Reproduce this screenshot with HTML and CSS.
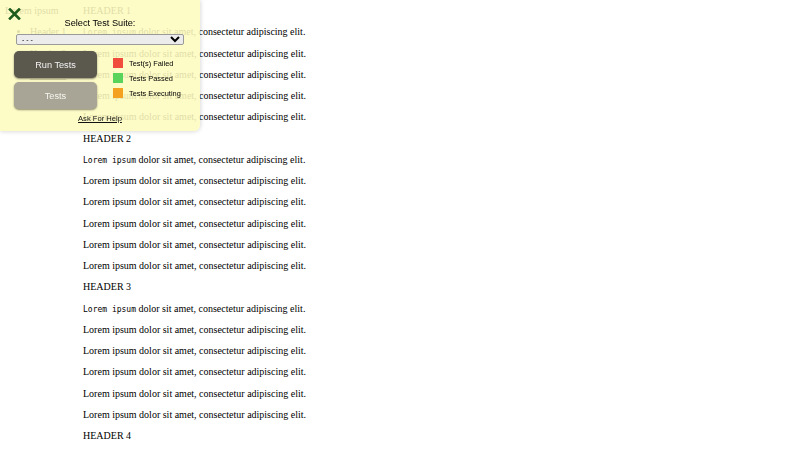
FILE: index.html
```html
<!DOCTYPE html>
<html lang="en">
<head>
    <meta charset="UTF-8">
    <meta name="viewport" content="width=device-width, initial-scale=1.0">
    <title>Test Runner</title>
    <link rel="stylesheet" href="styles.css">
</head>
<body>
    <div class="page">
        <div class="sidebar">
            <p>Lorem ipsum</p>
            <ul>
                <li><a href>Header 1</a></li>
                <li><a href>Header 2</a></li>
                <li><a href>Header 3</a></li>
                <li><a href>Header 4</a></li>
            </ul>
        </div>
        <div class="content">
            <h2>HEADER 1</h2>
            <p><code>Lorem ipsum</code> dolor sit amet, consectetur adipiscing elit.</p>
            <p>Lorem ipsum dolor sit amet, consectetur adipiscing elit.</p>
            <p>Lorem ipsum dolor sit amet, consectetur adipiscing elit.</p>
            <p>Lorem ipsum dolor sit amet, consectetur adipiscing elit.</p>
            <p>Lorem ipsum dolor sit amet, consectetur adipiscing elit.</p>
            <h2>HEADER 2</h2>
            <p><code>Lorem ipsum</code> dolor sit amet, consectetur adipiscing elit.</p>
            <p>Lorem ipsum dolor sit amet, consectetur adipiscing elit.</p>
            <p>Lorem ipsum dolor sit amet, consectetur adipiscing elit.</p>
            <p>Lorem ipsum dolor sit amet, consectetur adipiscing elit.</p>
            <p>Lorem ipsum dolor sit amet, consectetur adipiscing elit.</p>
            <p>Lorem ipsum dolor sit amet, consectetur adipiscing elit.</p>
            <h2>HEADER 3</h2>
            <p><code>Lorem ipsum</code> dolor sit amet, consectetur adipiscing elit.</p>
            <p>Lorem ipsum dolor sit amet, consectetur adipiscing elit.</p>
            <p>Lorem ipsum dolor sit amet, consectetur adipiscing elit.</p>
            <p>Lorem ipsum dolor sit amet, consectetur adipiscing elit.</p>
            <p>Lorem ipsum dolor sit amet, consectetur adipiscing elit.</p>
            <p>Lorem ipsum dolor sit amet, consectetur adipiscing elit.</p>
            <h2>HEADER 4</h2>
            <p><code>Lorem ipsum</code> dolor sit amet, consectetur adipiscing elit.</p>
            <p>Lorem ipsum dolor sit amet, consectetur adipiscing elit.</p>
        </div>
    </div>

    <div class="test-panel">
        <button class="close-btn" type="button" title="Close">
            <svg width="13" height="12" viewBox="0 0 13 12">
                <path d="M2 1.5 L11 10.5 M11 1.5 L2 10.5" stroke="#1d5c1d" stroke-width="2.6" stroke-linecap="square"/>
            </svg>
        </button>
        <div class="suite-title">Select Test Suite:</div>
        <select class="suite-select">
            <option>- - -</option>
        </select>
        <div class="controls">
            <div class="buttons">
                <button class="run-btn" type="button">Run Tests</button>
                <button class="tests-btn" type="button">Tests</button>
            </div>
            <ul class="legend">
                <li><span class="swatch failed"></span>Test(s) Failed</li>
                <li><span class="swatch passed"></span>Tests Passed</li>
                <li><span class="swatch running"></span>Tests Executing</li>
            </ul>
        </div>
        <a class="help-link" href>Ask For Help</a>
    </div>
</body>
</html>
```

FILE: styles.css
```css
body {
    font-family: "Liberation Serif", serif;
    font-size: 10px;
    color: #000;
    background-color: #fff;
    margin: 0;
    padding: 5px;
}
.page {
    display: flex;
}
p, h2 {
    margin: 0 0 10px 0;
    height: 11.25px;
    line-height: 11.25px;
}
h2 {
    font-size: 10px;
    font-weight: normal;
}
code {
    font-family: "DejaVu Sans Mono", monospace;
    font-size: 8px;
    line-height: 1;
}
.sidebar {
    width: 78px;
    flex-shrink: 0;
}
.sidebar ul {
    margin: 0;
    padding-left: 25px;
}
.sidebar li {
    height: 11.25px;
    line-height: 11.25px;
    margin-bottom: 10px;
}
.sidebar a {
    color: #000;
}

/* floating test panel */
.test-panel {
    position: fixed;
    top: 0;
    left: 0;
    width: 200px;
    height: 131px;
    box-sizing: border-box;
    padding: 18px 16px 0 16px;
    background-color: rgba(253, 250, 190, 0.88);
    border-bottom-right-radius: 6px;
    box-shadow: 0 0 5px rgba(0, 0, 0, 0.2);
    font-family: "Liberation Sans", Arial, sans-serif;
    color: #000;
}
.close-btn {
    position: absolute;
    top: 8px;
    left: 8px;
    padding: 0;
    border: none;
    background: none;
    cursor: pointer;
    line-height: 0;
}
.suite-title {
    text-align: center;
    font-size: 9.2px;
    line-height: 10px;
}
.suite-select {
    display: block;
    width: 168px;
    height: 11px;
    margin-top: 6px;
    padding: 0 0 0 1px;
    font-size: 7px;
    font-family: "Liberation Sans", Arial, sans-serif;
    background-color: #ececec;
    border: 1px solid #9a9a9a;
    border-radius: 2px;
    color: #000;
}
.controls {
    display: flex;
    margin: 6px 0 0 -2px;
}
.buttons {
    display: flex;
    flex-direction: column;
    gap: 4px;
}
.buttons button {
    width: 83px;
    height: 27px;
    border: none;
    border-radius: 5px;
    font-family: "Liberation Sans", Arial, sans-serif;
    font-size: 9.2px;
    box-shadow: 0 1px 2px rgba(0, 0, 0, 0.45);
    cursor: pointer;
}
.run-btn {
    background-color: #5b584e;
    color: #f2f2f2;
}
.tests-btn {
    background-color: #a8a596;
    color: #f6f6ef;
}
.legend {
    list-style: none;
    margin: 7px 0 0 16px;
    padding: 0;
    display: flex;
    flex-direction: column;
    gap: 5px;
}
.legend li {
    display: flex;
    align-items: center;
    height: 10px;
    font-size: 7.4px;
}
.swatch {
    width: 10px;
    height: 10px;
    margin-right: 6px;
}
.failed {
    background-color: #f04d3c;
}
.passed {
    background-color: #5ad35a;
}
.running {
    background-color: #f4a020;
}
.help-link {
    display: block;
    width: fit-content;
    margin: 5px auto 0 auto;
    font-size: 7.6px;
    line-height: 10px;
    color: #111;
}
```
